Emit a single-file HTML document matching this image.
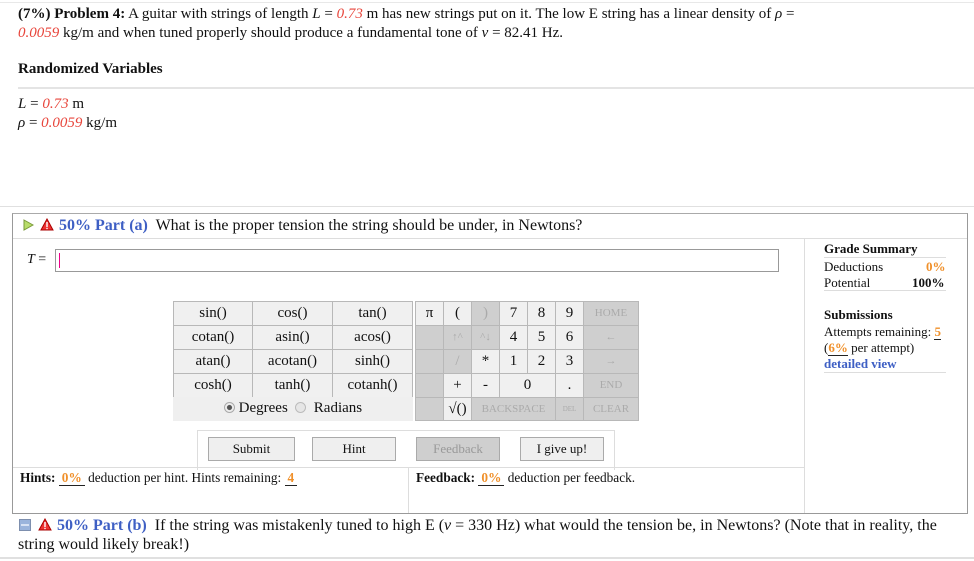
<!DOCTYPE html>
<html><head><meta charset="utf-8"><style>
*{margin:0;padding:0;box-sizing:border-box}
body{width:974px;height:561px;position:relative;background:#fff;font-family:"Liberation Serif",serif;font-size:15px;color:#111;overflow:hidden}
.a{position:absolute;white-space:nowrap}
.r{color:#e8463c;font-style:italic}
.o{color:#f0902a;font-weight:bold}
.bl{color:#3e5fc4;font-weight:bold}
.hl{position:absolute;height:1px;background:#ddd}
.vl{position:absolute;width:1px;background:#ddd}
.c{position:absolute;background:#f0f0f0;border:1px solid #b8b8b8;text-align:center;font-size:15px;line-height:22px}
.d{background:#cfcfcf;color:#aaa}
.s{font-size:11px}
.btn{position:absolute;top:437px;height:24px;width:87px;background:#efefef;border:1px solid #aaa;text-align:center;font-size:13px;line-height:22px}
u{text-decoration:none;border-bottom:1px solid #222;padding:0 3px}
</style></head><body>
<div class="hl" style="left:0;top:2px;width:974px;background:#e8e8e8"></div>
<div class="a" style="left:18px;top:6px"><b>(7%) Problem 4:</b> A guitar with strings of length <i>L</i> = <span class="r">0.73</span> m has new strings put on it. The low E string has a linear density of <i>ρ</i> =</div>
<div class="a" style="left:18px;top:25px"><span class="r">0.0059</span> kg/m and when tuned properly should produce a fundamental tone of <i>ν</i> = 82.41 Hz.</div>
<div class="a" style="left:18px;top:61px;font-weight:bold">Randomized Variables</div>
<div class="hl" style="left:18px;top:87px;width:956px;height:2px;background:#e4e4e4"></div>
<div class="a" style="left:18px;top:96px"><i>L</i> = <span class="r">0.73</span> m</div>
<div class="a" style="left:18px;top:115px"><i>ρ</i> = <span class="r">0.0059</span> kg/m</div>
<div class="hl" style="left:0;top:206px;width:974px;background:#e0e0e0"></div>

<div style="position:absolute;left:12px;top:213px;width:956px;height:301px;border:1px solid #999;border-top-color:#aaa"></div>
<div class="hl" style="left:13px;top:238px;width:954px"></div>
<svg class="a" style="left:22px;top:219px" width="12" height="12"><path d="M2 1 L11 6 L2 11 Z" fill="#b8dd6a" stroke="#7a9a3a"/></svg>
<svg class="a" style="left:40px;top:218px" width="14" height="13"><path d="M7 1 L13 12 L1 12 Z" fill="#e33" stroke="#a00"/><rect x="6.3" y="4" width="1.4" height="5" fill="#fff"/><rect x="6.3" y="9.8" width="1.4" height="1.4" fill="#fff"/></svg>
<div class="a" style="left:59px;top:217px;font-size:16px"><span class="bl">50% Part (a)</span>&nbsp; What is the proper tension the string should be under, in Newtons?</div>
<div class="vl" style="left:804px;top:239px;height:274px"></div>
<div class="a" style="left:27px;top:252px;font-size:14px"><i>T</i> =</div>
<div style="position:absolute;left:55px;top:249px;width:724px;height:23px;border:1px solid #999"></div>
<div class="vl" style="left:59px;top:253px;height:15px;background:#e08"></div>

<div class="a" style="left:824px;top:241px;font-size:13px;font-weight:bold">Grade Summary</div>
<div class="hl" style="left:824px;top:257px;width:122px"></div>
<div class="a" style="left:824px;top:259px;font-size:13px">Deductions</div><div class="a o" style="left:926px;top:259px;font-size:13px">0%</div>
<div class="a" style="left:824px;top:275px;font-size:13px">Potential</div><div class="a" style="left:912px;top:275px;font-size:13px;font-weight:bold">100%</div>
<div class="hl" style="left:824px;top:290px;width:122px"></div>
<div class="a" style="left:824px;top:307px;font-size:13px;font-weight:bold">Submissions</div>
<div class="a" style="left:824px;top:324px;font-size:13px">Attempts remaining: <span class="o" style="border-bottom:1px solid #222">5</span></div>
<div class="a" style="left:824px;top:340px;font-size:13px">(<span class="o" style="border-bottom:1px solid #222">6%</span> per attempt)</div>
<div class="a bl" style="left:824px;top:356px;font-size:13px">detailed view</div>
<div class="hl" style="left:824px;top:372px;width:122px"></div>

<div class="c" style="left:173px;top:301px;width:80px;height:25px">sin()</div>
<div class="c" style="left:252px;top:301px;width:81px;height:25px">cos()</div>
<div class="c" style="left:332px;top:301px;width:81px;height:25px">tan()</div>
<div class="c" style="left:173px;top:325px;width:80px;height:25px">cotan()</div>
<div class="c" style="left:252px;top:325px;width:81px;height:25px">asin()</div>
<div class="c" style="left:332px;top:325px;width:81px;height:25px">acos()</div>
<div class="c" style="left:173px;top:349px;width:80px;height:25px">atan()</div>
<div class="c" style="left:252px;top:349px;width:81px;height:25px">acotan()</div>
<div class="c" style="left:332px;top:349px;width:81px;height:25px">sinh()</div>
<div class="c" style="left:173px;top:373px;width:80px;height:25px">cosh()</div>
<div class="c" style="left:252px;top:373px;width:81px;height:25px">tanh()</div>
<div class="c" style="left:332px;top:373px;width:81px;height:25px">cotanh()</div>
<div class="c" style="left:173px;top:397px;width:240px;height:24px;border:none;background:#efefef"><span style="display:inline-block;width:11px;height:11px;border-radius:50%;border:1px solid #aaa;background:radial-gradient(#555 35%,#eee 45%);vertical-align:-1px"></span> Degrees &nbsp;<span style="display:inline-block;width:11px;height:11px;border-radius:50%;border:1px solid #bbb;background:#e6e6e6;vertical-align:-1px"></span> &nbsp;Radians</div>

<div class="c" style="left:415px;top:301px;width:29px;height:25px">π</div>
<div class="c" style="left:443px;top:301px;width:29px;height:25px">(</div>
<div class="c d" style="left:471px;top:301px;width:29px;height:25px">)</div>
<div class="c" style="left:499px;top:301px;width:29px;height:25px">7</div>
<div class="c" style="left:527px;top:301px;width:29px;height:25px">8</div>
<div class="c" style="left:555px;top:301px;width:29px;height:25px">9</div>
<div class="c d s" style="left:583px;top:301px;width:56px;height:25px">HOME</div>
<div class="c d" style="left:415px;top:325px;width:29px;height:25px"></div>
<div class="c d s" style="left:443px;top:325px;width:29px;height:25px">↑^</div>
<div class="c d s" style="left:471px;top:325px;width:29px;height:25px">^↓</div>
<div class="c" style="left:499px;top:325px;width:29px;height:25px">4</div>
<div class="c" style="left:527px;top:325px;width:29px;height:25px">5</div>
<div class="c" style="left:555px;top:325px;width:29px;height:25px">6</div>
<div class="c d s" style="left:583px;top:325px;width:56px;height:25px">←</div>
<div class="c d" style="left:415px;top:349px;width:29px;height:25px"></div>
<div class="c d" style="left:443px;top:349px;width:29px;height:25px">/</div>
<div class="c" style="left:471px;top:349px;width:29px;height:25px">*</div>
<div class="c" style="left:499px;top:349px;width:29px;height:25px">1</div>
<div class="c" style="left:527px;top:349px;width:29px;height:25px">2</div>
<div class="c" style="left:555px;top:349px;width:29px;height:25px">3</div>
<div class="c d s" style="left:583px;top:349px;width:56px;height:25px">→</div>
<div class="c d" style="left:415px;top:373px;width:29px;height:25px"></div>
<div class="c" style="left:443px;top:373px;width:29px;height:25px">+</div>
<div class="c" style="left:471px;top:373px;width:29px;height:25px">-</div>
<div class="c" style="left:499px;top:373px;width:57px;height:25px">0</div>
<div class="c" style="left:555px;top:373px;width:29px;height:25px">.</div>
<div class="c d s" style="left:583px;top:373px;width:56px;height:25px">END</div>
<div class="c d" style="left:415px;top:397px;width:29px;height:24px"></div>
<div class="c" style="left:443px;top:397px;width:29px;height:24px">√()</div>
<div class="c d s" style="left:471px;top:397px;width:85px;height:24px">BACKSPACE</div>
<div class="c d" style="left:555px;top:397px;width:29px;height:24px;font-size:7px">DEL</div>
<div class="c d s" style="left:583px;top:397px;width:56px;height:24px">CLEAR</div>

<div style="position:absolute;left:197px;top:430px;width:418px;height:40px;border:1px solid #ddd;border-bottom:none"></div>
<div class="btn" style="left:208px">Submit</div>
<div class="btn" style="left:312px;width:84px">Hint</div>
<div class="btn" style="left:416px;width:84px;background:#cfcfcf;color:#999">Feedback</div>
<div class="btn" style="left:520px;width:84px">I give up!</div>

<div class="hl" style="left:13px;top:467px;width:791px"></div>
<div class="vl" style="left:408px;top:467px;height:46px"></div>
<div class="a" style="left:20px;top:470px;font-size:13.3px"><b>Hints:</b> <u class="o">0%</u> deduction per hint. Hints remaining: <u class="o">4</u></div>
<div class="a" style="left:416px;top:470px;font-size:13.3px"><b>Feedback:</b> <u class="o">0%</u> deduction per feedback.</div>

<svg class="a" style="left:19px;top:519px" width="12" height="12"><rect x="0.5" y="0.5" width="11" height="11" fill="#9ab4dc" stroke="#7d8fae"/><rect x="2" y="5" width="8" height="2" fill="#d7e2f4"/></svg>
<svg class="a" style="left:38px;top:518px" width="14" height="13"><path d="M7 1 L13 12 L1 12 Z" fill="#e33" stroke="#a00"/><rect x="6.3" y="4" width="1.4" height="5" fill="#fff"/><rect x="6.3" y="9.8" width="1.4" height="1.4" fill="#fff"/></svg>
<div class="a" style="left:57px;top:517px;font-size:16px"><span class="bl">50% Part (b)</span>&nbsp; If the string was mistakenly tuned to high E (<i>ν</i> = 330 Hz) what would the tension be, in Newtons? (Note that in reality, the</div>
<div class="a" style="left:18px;top:536px;font-size:16px">string would likely break!)</div>
<div class="hl" style="left:0;top:557px;width:974px;height:2px;background:#e0e0e0"></div>
</body></html>
